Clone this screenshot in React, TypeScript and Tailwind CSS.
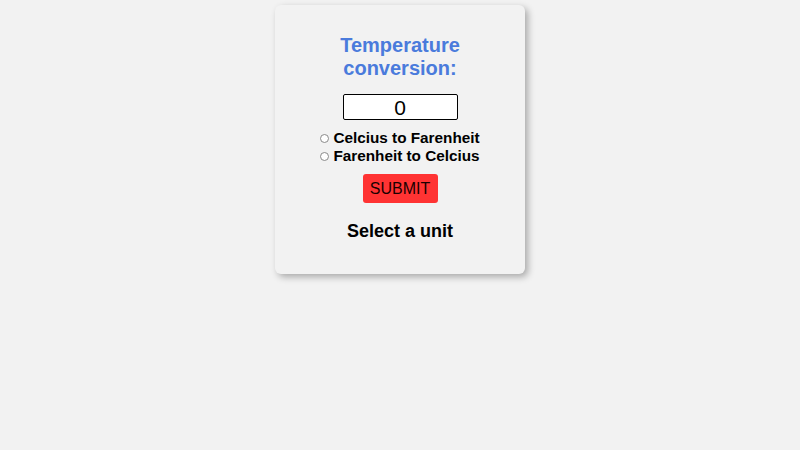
import React from "react";

export default function App() {
  return (
    <div className="w-[800px] h-[450px] bg-[#f2f2f2] flex justify-center" style={{ fontFamily: '"Liberation Sans", Arial, sans-serif' }}>
      <div className="mt-[5px] w-[250px] h-[269px] bg-[#f2f2f2] rounded-[6px] shadow-[3px_3px_7px_rgba(0,0,0,0.3)] flex flex-col items-center pt-[29px]">
        <h1 className="text-[20px] leading-[23px] font-bold text-[#4a7bdc] text-center">
          Temperature
          <br />
          conversion:
        </h1>
        <div className="mt-[14px] w-[115px] h-[26px] bg-white border border-black rounded-[2px] flex items-center justify-center text-[21px] leading-none text-black">
          0
        </div>
        <div className="mt-[9px] flex flex-col text-[15.3px] leading-[18px] font-bold text-black">
          <label className="flex items-center gap-[4px]">
            <span className="w-[9px] h-[9px] rounded-full border border-[#8a8a8a] bg-white mt-[1px]" />
            Celcius to Farenheit
          </label>
          <label className="flex items-center gap-[4px]">
            <span className="w-[9px] h-[9px] rounded-full border border-[#8a8a8a] bg-white mt-[1px]" />
            Farenheit to Celcius
          </label>
        </div>
        <button className="mt-[9px] w-[75px] h-[29px] bg-[#ff3333] rounded-[3px] text-[16px] text-[#1a0000]">
          SUBMIT
        </button>
        <div className="mt-[18px] text-[18px] leading-[21px] font-bold text-black">Select a unit</div>
      </div>
    </div>
  );
}
